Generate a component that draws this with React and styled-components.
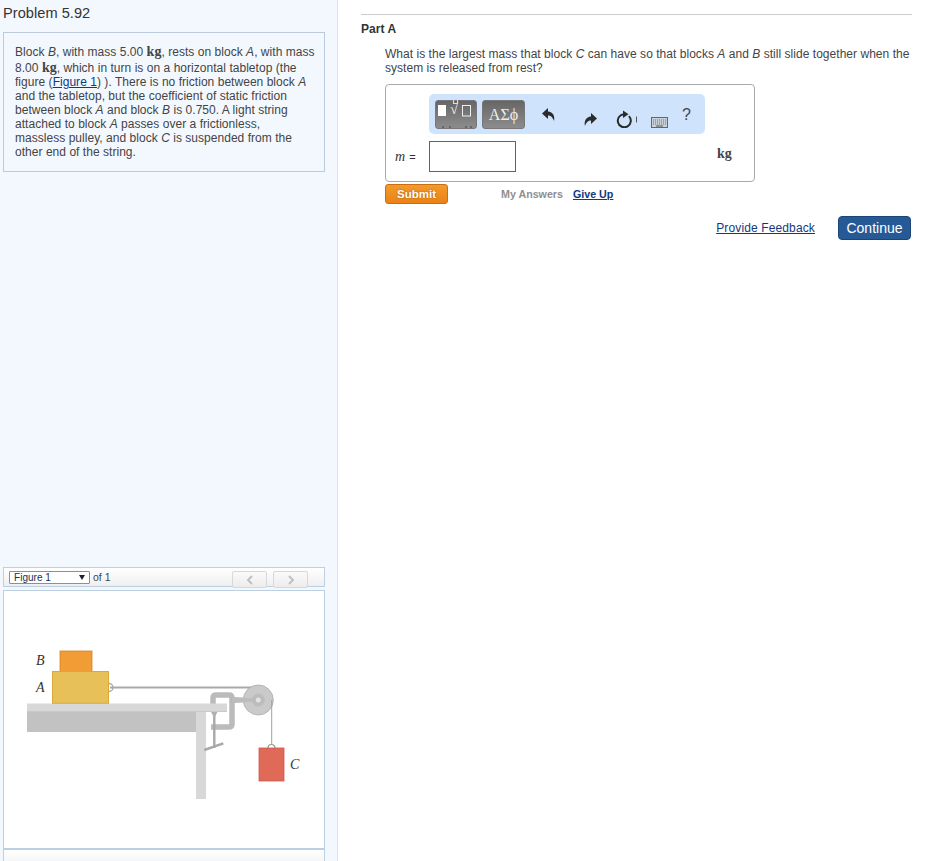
import styled, { createGlobalStyle } from "styled-components";

const GlobalStyle = createGlobalStyle`
    html, body {
        margin: 0;
        padding: 0;
        height: 861px;
        overflow: hidden;
        background: #fff;
    }
    body {
        font-family: "Liberation Sans", Arial, sans-serif;
        font-size: 12px;
        letter-spacing: 0.035px;
        color: #333;
    }
`;

const Page = styled.div`
    display: grid;
    grid-template-columns: 338px 1fr;
    height: 861px;
`;

const LeftColumn = styled.aside`
    background: #f3f8ff;
    border-right: 1px solid #dbe5f0;
    box-sizing: border-box;
    height: 861px;
    padding: 3px 12px 0 3px;
    overflow: hidden;
`;

const ProblemTitle = styled.h1`
    margin: 1px 0 10px;
    font-size: 14.6px;
    line-height: 18px;
    font-weight: normal;
    color: #333;
`;

const ProblemBox = styled.div`
    box-sizing: border-box;
    height: 140px;
    padding: 11px 0 0 11px;
    border: 1px solid #b9cbdd;
    line-height: 14px;
    white-space: nowrap;
    color: #444;
`;

const Unit = styled.span`
    font-family: "Liberation Serif", serif;
    font-weight: bold;
    font-size: 14px;
    line-height: 15.5px;
`;

const TextLink = styled.a`
    color: #10397f;
    text-decoration: underline;
    cursor: pointer;
`;

const FigureBar = styled.div`
    box-sizing: border-box;
    display: flex;
    align-items: flex-start;
    height: 20px;
    margin-top: 395px;
    padding: 3px 0 0 5px;
    border: 1px solid #bcd0e2;
    background: linear-gradient(#fff, #efefef);
    font-size: 10.5px;
`;

const FigureSelect = styled.div`
    box-sizing: border-box;
    display: flex;
    align-items: center;
    justify-content: space-between;
    width: 81px;
    height: 13px;
    padding: 0 4px;
    background: #fff;
    border: 1px solid #8f8f8f;
    border-radius: 1px;
    color: #1a2f55;
    font-size: 10px;
`;

const DownArrow = styled.span`
    width: 0;
    height: 0;
    border-left: 3px solid transparent;
    border-right: 3px solid transparent;
    border-top: 5px solid #222;
`;

const OfLabel = styled.span`
    margin-left: 3px;
    line-height: 12px;
    color: #444;
`;

const NavGroup = styled.div`
    display: flex;
    gap: 6px;
    margin-left: auto;
    margin-right: 16px;
`;

const NavButton = styled.div`
    box-sizing: border-box;
    display: flex;
    align-items: center;
    justify-content: center;
    width: 35px;
    height: 17px;
    border: 1px solid #d8d8d8;
    border-radius: 2px;
    background: linear-gradient(#fafafa, #ececec);
`;

const FigureBox = styled.div`
    box-sizing: border-box;
    height: 260px;
    margin-top: 3px;
    background: #fff;
    border: 1px solid #bcd0e2;
    border-bottom-width: 2px;
`;

const FigureArt = styled.svg`
    display: block;
    width: 320px;
    height: 257px;
`;

const FigureFoot = styled.div`
    height: 20px;
    border: 1px solid #bcd0e2;
    border-width: 0 1px;
    background: linear-gradient(#fff, #efefef);
`;

const RightColumn = styled.main`
    box-sizing: border-box;
    padding: 14px 19px 0 23px;
`;

const PartHeader = styled.h2`
    margin: 0;
    padding-top: 7px;
    border-top: 1px solid #ccc;
    font-size: 12px;
    line-height: 14px;
    font-weight: bold;
    color: #333;
`;

const PartBody = styled.div`
    padding: 11px 0 0 24px;
`;

const Question = styled.p`
    margin: 0;
    line-height: 14px;
    color: #444;
`;

const AnswerBox = styled.div`
    box-sizing: border-box;
    width: 370px;
    height: 98px;
    margin-top: 9px;
    padding: 9px 0 0 43px;
    border: 1px solid #aaa;
    border-radius: 4px;
`;

const Toolbar = styled.div`
    box-sizing: border-box;
    display: flex;
    align-items: flex-start;
    width: 276px;
    height: 40px;
    padding-top: 6px;
    padding-left: 6px;
    background: #cfe4fc;
    border-radius: 5px;
`;

const ToolButton = styled.div`
    box-sizing: border-box;
    display: flex;
    align-items: center;
    justify-content: center;
    width: ${({ $width }) => $width}px;
    height: 29px;
    margin-right: 5px;
    border: 1px solid #777;
    border-radius: 3px;
    background: linear-gradient(#666, #8c8c8c);
    color: #eee;
    font-family: "Liberation Serif", serif;
    font-size: 16px;
`;

const ToolIcon = styled.svg`
    flex: none;
    margin-left: ${({ $left }) => $left}px;
    margin-top: ${({ $top }) => $top}px;
`;

const GlyphArt = styled.svg`
    overflow: visible;
`;

const HelpMark = styled.span`
    margin-left: 14px;
    margin-top: 7px;
    font-size: 16px;
    line-height: 16px;
    color: #444;
`;

const EntryRow = styled.div`
    display: flex;
    align-items: center;
    height: 31px;
    margin: 7px 0 0 -34px;
`;

const EntryLabel = styled.span`
    width: 34px;
    font-size: 11px;
    color: #333;
`;

const MathVar = styled.i`
    font-family: "Liberation Serif", serif;
    font-size: 14px;
    margin-right: 1px;
`;

const EntryInput = styled.input`
    box-sizing: border-box;
    width: 87px;
    height: 31px;
    padding: 0 4px;
    border: 1px solid #3c66b0;
    background: #fff;
    outline: none;
`;

const EntryUnit = styled(Unit)`
    margin: 0 0 6px 201px;
    color: #444;
`;

const ActionRow = styled.div`
    display: flex;
    align-items: center;
    height: 20px;
    margin-top: 2px;
`;

const SubmitButton = styled.button`
    box-sizing: border-box;
    width: 63px;
    height: 20px;
    padding: 0;
    border: 1px solid #c96f12;
    border-radius: 3px;
    background: linear-gradient(#f49a2c, #ea8216);
    color: #fff;
    font-family: inherit;
    font-size: 11.5px;
    font-weight: bold;
    text-shadow: 0 0 2px #a85a00;
`;

const MutedLabel = styled.span`
    margin-left: 53px;
    font-size: 10.7px;
    letter-spacing: 0;
    font-weight: bold;
    color: #8f8f8f;
`;

const GiveUpLink = styled(TextLink)`
    margin-left: 10px;
    font-size: 10.7px;
    letter-spacing: 0;
    font-weight: bold;
`;

const FooterRow = styled.div`
    display: flex;
    align-items: center;
    justify-content: flex-end;
    gap: 23px;
    margin: 12px 1px 0 0;
`;

const FeedbackLink = styled(TextLink)`
    letter-spacing: 0.13px;
`;

const ContinueButton = styled.button`
    box-sizing: border-box;
    width: 73px;
    height: 24px;
    padding: 0;
    border: 1px solid #1d4478;
    border-radius: 4px;
    background: #265a96;
    color: #fff;
    font-family: inherit;
    font-size: 14px;
`;

function UndoIcon() {
    return (
        <ToolIcon width="14" height="14" viewBox="0 0 14 14" $left={12} $top={8}>
            <path d="M6 0 0 5.500 6 11V7.500c2.800 0 4.500 1.500 6 5.500 1.200-5-1-9-6-9.500z" fill="#2b2b2b" />
        </ToolIcon>
    );
}

function RedoIcon() {
    return (
        <ToolIcon width="14" height="14" viewBox="0 0 14 14" $left={27} $top={13}>
            <path d="M8 0l6 5.500L8 11V7.500C5.200 7.500 3.500 9 2 13 .800 8 3 4 8 3.500z" fill="#2b2b2b" />
        </ToolIcon>
    );
}

function RefreshIcon() {
    return (
        <ToolIcon width="22" height="18" viewBox="0 0 22 18" $left={19} $top={10}>
            <path d="M8.300 4.200A6.500 6.500 0 1 0 12.900 6.100" fill="none" stroke="#2b2b2b" strokeWidth="2" />
            <path d="M7 .5l5.500 3.700L7 8z" fill="#2b2b2b" />
            <rect x="20" y="6.500" width="1" height="6" fill="#555" />
        </ToolIcon>
    );
}

function KeyboardIcon() {
    return (
        <ToolIcon width="17" height="11" viewBox="0 0 17 11" $left={13} $top={17}>
            <rect x=".5" y=".5" width="16" height="10" fill="#c8d2d8" stroke="#666" />
            <path d="M2 3h13M2 5h13M2 7h13" stroke="#6b7478" strokeDasharray="1 1" />
            <path d="M5 9h7" stroke="#555" />
        </ToolIcon>
    );
}

function TemplateGlyph() {
    return (
        <GlyphArt width="40" height="27" viewBox="0 0 40 27">
            <rect x="2" y="4" width="8" height="11" fill="#fff" />
            <text x="14" y="13" fontFamily="Liberation Serif, serif" fontSize="15" fill="#eee">√</text>
            <rect x="17.500" y="-1.500" width="4" height="4" fill="none" stroke="#ddd" />
            <rect x="26.500" y="4.500" width="8" height="10.500" fill="none" stroke="#eee" />
            <path d="M6 26h2M13 26h2M29 26h2M34 26h2" stroke="#444" />
        </GlyphArt>
    );
}

function Chevron({ flip }) {
    return (
        <svg width="8" height="10" viewBox="0 0 8 10">
            <path d={flip ? "M2 1l4 4-4 4" : "M6 1 2 5l4 4"} fill="none" stroke="#bdbdbd" strokeWidth="1.800" />
        </svg>
    );
}

function BlocksFigure() {
    const labelProps = { fontFamily: "Liberation Serif, serif", fontStyle: "italic", fontSize: 14, fill: "#333" };
    return (
        <FigureArt viewBox="4 591 320 257">
            {/* clamp, behind the tabletop */}
            <path d="M213 704V698Q213 695 216 695H229Q232 695 232 698V724Q232 727 229 727H211" fill="none" stroke="#bbb" strokeWidth="5.500" />
            <path d="M231 697L258 698V702L231 703z" fill="#b8b8b8" />
            {/* table */}
            <rect x="27" y="712" width="169" height="20" fill="#c2c2c2" />
            <rect x="196" y="712" width="10" height="87" fill="#d8d8d8" />
            <rect x="27" y="703.500" width="200" height="8.500" fill="#d8d8d8" />
            <path d="M27 711.500h200" stroke="#c8c8c8" />
            {/* screw */}
            <path d="M214.300 712V748" stroke="#a8a8a8" strokeWidth="2.400" />
            <path d="M211 712h6.500l-3.200 6z" fill="#b0b0b0" />
            <path d="M204.300 750l19-6.700" stroke="#a8a8a8" strokeWidth="2.400" />
            {/* string */}
            <path d="M110 687.500H256" stroke="#a9a9a9" strokeWidth="1.800" />
            {/* pulley */}
            <circle cx="258.300" cy="700" r="15" fill="#cacaca" stroke="#b4b4b4" />
            <circle cx="258.300" cy="700" r="6.500" fill="#bcbcbc" />
            <path d="M232 697.500l26 1v3l-26 1z" fill="#bcbcbc" />
            <circle cx="258.300" cy="700" r="2.500" fill="#e2e2e2" />
            <path d="M271.700 700V745" stroke="#a0a0a0" strokeWidth="1" />
            {/* blocks */}
            <rect x="60" y="651" width="32" height="20.500" fill="#f19c35" stroke="#d58526" strokeWidth=".8" />
            <rect x="52.500" y="671.500" width="56" height="31.800" fill="#e7c05a" stroke="#d9a93a" strokeWidth="1" />
            <path d="M109 683.500a4 4 0 0 1 0 8" fill="none" stroke="#aaa" strokeWidth="1.400" />
            <path d="M268 748a3.500 3.500 0 0 1 7 0" fill="none" stroke="#999" strokeWidth="1.200" />
            <rect x="259" y="748" width="25" height="33" fill="#e06a58" stroke="#cf5a4a" strokeWidth=".8" />
            <text x="36" y="665" {...labelProps}>B</text>
            <text x="36" y="692" {...labelProps}>A</text>
            <text x="290" y="769" {...labelProps}>C</text>
        </FigureArt>
    );
}

export default function App() {
    return (
        <Page>
            <GlobalStyle />
            <LeftColumn>
                <ProblemTitle>Problem 5.92</ProblemTitle>
                <ProblemBox>
                    Block <i>B</i>, with mass 5.00 <Unit>kg</Unit>, rests on block <i>A</i>, with mass<br />
                    8.00 <Unit>kg</Unit>, which in turn is on a horizontal tabletop (the<br />
                    figure (<TextLink>Figure 1</TextLink>) ). There is no friction between block <i>A</i><br />
                    and the tabletop, but the coefficient of static friction<br />
                    between block <i>A</i> and block <i>B</i> is 0.750. A light string<br />
                    attached to block <i>A</i> passes over a frictionless,<br />
                    massless pulley, and block <i>C</i> is suspended from the<br />
                    other end of the string.
                </ProblemBox>
                <FigureBar>
                    <FigureSelect>
                        Figure 1
                        <DownArrow />
                    </FigureSelect>
                    <OfLabel>of 1</OfLabel>
                    <NavGroup>
                        <NavButton><Chevron /></NavButton>
                        <NavButton><Chevron flip /></NavButton>
                    </NavGroup>
                </FigureBar>
                <FigureBox>
                    <BlocksFigure />
                </FigureBox>
                <FigureFoot />
            </LeftColumn>
            <RightColumn>
                <PartHeader>Part A</PartHeader>
                <PartBody>
                    <Question>
                        What is the largest mass that block <i>C</i> can have so that blocks <i>A</i> and <i>B</i> still slide together when the system is released from rest?
                    </Question>
                    <AnswerBox>
                        <Toolbar>
                            <ToolButton $width={42}>
                                <TemplateGlyph />
                            </ToolButton>
                            <ToolButton $width={43}>ΑΣϕ</ToolButton>
                            <UndoIcon />
                            <RedoIcon />
                            <RefreshIcon />
                            <KeyboardIcon />
                            <HelpMark>?</HelpMark>
                        </Toolbar>
                        <EntryRow>
                            <EntryLabel>
                                <MathVar>m</MathVar> =
                            </EntryLabel>
                            <EntryInput />
                            <EntryUnit>kg</EntryUnit>
                        </EntryRow>
                    </AnswerBox>
                    <ActionRow>
                        <SubmitButton>Submit</SubmitButton>
                        <MutedLabel>My Answers</MutedLabel>
                        <GiveUpLink>Give Up</GiveUpLink>
                    </ActionRow>
                </PartBody>
                <FooterRow>
                    <FeedbackLink>Provide Feedback</FeedbackLink>
                    <ContinueButton>Continue</ContinueButton>
                </FooterRow>
            </RightColumn>
        </Page>
    );
}
